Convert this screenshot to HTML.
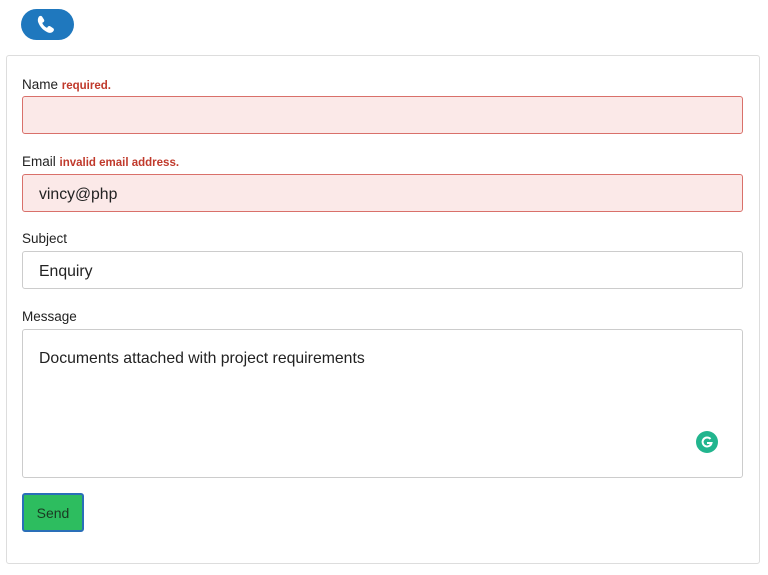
<!DOCTYPE html>
<html><head><style>
body{margin:0;width:768px;height:575px;background:#fff;font-family:"Liberation Sans",sans-serif;position:relative;overflow:hidden}
.abs{position:absolute}
.phone{left:21px;top:9px;width:53px;height:31px;border-radius:16px;background:#1f78be}
.box{left:6px;top:55px;width:754px;height:509px;border:1px solid #ddd;border-radius:3px;box-sizing:border-box}
.lbl{left:22px;font-size:13.5px;color:#222}
.lbl b{color:#c0392b;font-size:11.5px}
.in{left:22px;width:721px;height:38px;box-sizing:border-box;border:1px solid #ccc;border-radius:3px;font-size:15.8px;color:#222;padding-left:16px;line-height:39px}
.err{background:#fbe9e8;border-color:#d9706a}
.btn{left:22px;top:493px;width:62px;height:39px;box-sizing:border-box;background:#2dbd5f;border:2px solid #2a6fb8;border-radius:3px;font-size:14px;color:#1a3a22;text-align:center;line-height:37px}
</style></head><body>
<div class="abs phone"><svg width="53" height="31" viewBox="0 0 53 31"><path d="M18 7.5c1.1-.9 2.5-.9 3.2.2l1.8 2.9c.6 1 .2 2-.7 2.6l-1.1.7c.9 2.2 2.6 4 4.8 5l.8-1.1c.7-.8 1.7-1 2.6-.4l2.8 1.9c1 .7 1 2 .1 3-1.5 1.7-3.6 2-5.6 1.1-4.5-2-7.8-5.6-9.5-10.1-.7-2.1-.3-4.4.8-5.8z" fill="#fff"/></svg></div>
<div class="abs box"></div>
<div class="abs lbl" style="top:77px">Name <b>required.</b></div>
<div class="abs in err" style="top:96px"></div>
<div class="abs lbl" style="top:154px">Email <b>invalid email address.</b></div>
<div class="abs in err" style="top:174px">vincy@php</div>
<div class="abs lbl" style="top:231px">Subject</div>
<div class="abs in" style="top:251px">Enquiry</div>
<div class="abs lbl" style="top:309px">Message</div>
<div class="abs in" style="top:329px;height:149px;line-height:normal;padding-top:20px">Documents attached with project requirements</div>
<div class="abs" style="left:696px;top:431px;width:22px;height:22px;border-radius:50%;background:#22b58e"><svg width="22" height="22"><path d="M14.5 8a4.5 4.5 0 1 0 1 4H11" stroke="#fff" stroke-width="2" fill="none"/></svg></div>
<div class="abs btn">Send</div>
</body></html>
